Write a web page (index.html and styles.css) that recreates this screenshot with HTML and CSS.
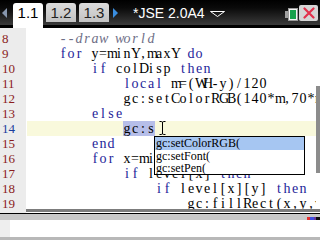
FILE: index.html
```
<!DOCTYPE html>
<html>
<head>
<meta charset="utf-8">
<link rel="stylesheet" href="styles.css">
</head>
<body>
<div class="app">
  <header class="topbar">
    <span class="arrow arrow-left"></span>
    <div class="tab active">1.1</div>
    <div class="tab">1.2</div>
    <div class="tab">1.3</div>
    <span class="arrow arrow-right"></span>
    <div class="title">*JSE 2.0A4<svg class="drop" width="15" height="6" viewBox="0 0 15 6"><path d="M0.5 0.5 H14.5 L7.5 5.5 Z" fill="none" stroke="#fff" stroke-width="1"/></svg></div>
    <div class="status">
      <svg class="battery" width="13" height="13" viewBox="0 0 13 13"><rect x="0" y="3" width="3" height="7" fill="#a0a0a0"/><rect x="3.5" y="0.5" width="9" height="12" fill="#f4f4f4" stroke="#9a9a9a"/><rect x="5" y="2" width="6" height="9" fill="#17a14c"/></svg>
      <div class="close"><svg width="12" height="12" viewBox="0 0 12 12"><path d="M1.5 1.5 L10.5 10.5 M10.5 1.5 L1.5 10.5" stroke="#e2314c" stroke-width="2.2" stroke-linecap="round"/></svg></div>
    </div>
  </header>
  <main class="editor">
    <div class="gutter">
      <div class="num">8</div>
      <div class="num">9</div>
      <div class="num">10</div>
      <div class="num">11</div>
      <div class="num">12</div>
      <div class="num">13</div>
      <div class="num cur">14</div>
      <div class="num">15</div>
      <div class="num">16</div>
      <div class="num">17</div>
      <div class="num">18</div>
      <div class="num">19</div>
    </div>
    <div class="code">
      <div class="ln">    <span class="cm">--draw world</span></div>
      <div class="ln">    <span class="kw">for</span> y=minY,maxY <span class="kw">do</span></div>
      <div class="ln">        <span class="kw">if</span> colDisp <span class="kw">then</span></div>
      <div class="ln">            <span class="kw">local</span> m=(WH-y)/120</div>
      <div class="ln">            gc:setColorRGB(140*m,70*m,0)</div>
      <div class="ln">        <span class="kw">else</span></div>
      <div class="ln cur">            <span class="sel">gc:s</span></div>
      <div class="ln">        <span class="kw">end</span></div>
      <div class="ln">        <span class="kw">for</span> x=minX,maxX <span class="kw">do</span></div>
      <div class="ln">            <span class="kw">if</span> level[x] <span class="kw">then</span></div>
      <div class="ln">                <span class="kw">if</span> level[x][y] <span class="kw">then</span></div>
      <div class="ln">                    gc:fillRect(x,y,w,h)</div>
    </div>
    <div class="vscroll"><div class="thumb"></div></div>
    <div class="popup">
      <div class="opt on">gc:setColorRGB(</div>
      <div class="opt">gc:setFont(</div>
      <div class="opt">gc:setPen(</div>
    </div>
    <svg class="ibeam" width="7" height="14" viewBox="0 0 7 14"><path d="M0.5 0.5 H2.5 Q3.5 0.5 3.5 2 V12 Q3.5 13.5 2.5 13.5 H0.5 M6.5 0.5 H4.5 Q3.5 0.5 3.5 2 M3.5 12 Q3.5 13.5 4.5 13.5 H6.5" fill="none" stroke="#000" stroke-width="1"/></svg>
  </main>
  <div class="hbar"><div class="hbar-gutter"></div><div class="hbar-thumb"></div></div>
  <div class="rule"></div>
  <div class="band"><span class="marker"></span></div>
  <div class="entry"><div class="entry-side"></div></div>
  <div class="foot"></div>
</div>
<script src="script.js"></script>
</body>
</html>
```
FILE: styles.css
```
* { box-sizing: border-box; }
html, body { margin: 0; padding: 0; }
body {
  width: 320px;
  height: 240px;
  overflow: hidden;
  background: #fff;
  font-family: "Liberation Sans", sans-serif;
}
.app {
  width: 320px;
  height: 240px;
  display: flex;
  flex-direction: column;
}
.topbar {
  height: 28px;
  flex: none;
  display: flex;
  align-items: flex-start;
  background: linear-gradient(#000 0, #0a0a0a 8px, #3a3a3a 25px, #000 25px);
}
.arrow {
  width: 0;
  height: 0;
  border-top: 5px solid transparent;
  border-bottom: 5px solid transparent;
  margin-top: 8px;
}
.arrow-left {
  border-right: 5px solid #8796ad;
  margin-left: 2px;
  margin-right: 6px;
}
.arrow-right {
  border-left: 5px solid #3a8ee0;
  margin-left: 1px;
  margin-right: 15px;
}
.tab {
  width: 30px;
  height: 19px;
  margin-top: 3px;
  margin-right: 3px;
  border-radius: 3px 3px 0 0;
  background: linear-gradient(#dcdcdc, #c2c2c2);
  color: #222;
  font-size: 15px;
  line-height: 20px;
  text-align: center;
}
.tab.active {
  height: 25px;
  background: #fff;
  color: #000;
}
.title {
  color: #fff;
  font-size: 14px;
  line-height: 20px;
  margin-top: 3px;
  display: flex;
  align-items: center;
}
.drop { margin-left: 5px; margin-top: 2px; }
.status {
  margin-left: auto;
  margin-right: 2px;
  margin-top: 5px;
  display: flex;
  align-items: center;
  gap: 1px;
}
.battery { margin-top: 2px; }
.close {
  width: 19px;
  height: 16px;
  border-radius: 2px;
  background: #d6d6d6;
  display: flex;
  align-items: center;
  justify-content: center;
}

.editor {
  position: relative;
  height: 181px;
  flex: none;
  display: flex;
}
.gutter {
  width: 26px;
  flex: none;
  background: #ececec;
  padding-top: 3px;
}
.num {
  height: 15px;
  line-height: 15px;
  font-family: "Liberation Serif", serif;
  font-size: 13px;
  color: #8b1c1c;
  padding-left: 2px;
}
.num.cur { color: #1c3c9c; }
.code {
  flex: 1;
  min-width: 0;
  padding-top: 3px;
  padding-left: 1px;
  overflow: hidden;
  font-family: "Liberation Serif", serif;
  font-size: 14px;
  color: #000;
}
.ln {
  height: 15px;
  line-height: 15px;
  white-space: pre;
}
.ln.cur { background: #f9f9dc; }
.ch {
  display: inline-block;
  width: 8px;
  text-align: center;
}
.kw { color: #1e1e9a; }
.cm { color: #6e6e86; font-style: italic; }
.sel { background: #b6bee9; }
.vscroll {
  width: 4px;
  flex: none;
}
.thumb {
  margin-top: 58px;
  height: 87px;
  background: #8c8c8c;
}
.popup {
  position: absolute;
  left: 154px;
  top: 108px;
  width: 151px;
  border: 1px solid #000;
  background: #fff;
  font-family: "Liberation Serif", serif;
  font-size: 12px;
  color: #000;
}
.opt {
  height: 12px;
  line-height: 12px;
  padding-left: 1px;
  white-space: nowrap;
}
.opt:first-child { height: 13px; line-height: 13px; }
.opt.on { background: #a6c6f2; }
.ibeam {
  position: absolute;
  left: 159px;
  top: 93px;
}
.hbar {
  height: 4px;
  flex: none;
  display: flex;
}
.hbar-gutter { width: 26px; background: #ececec; }
.hbar-thumb { flex: 1; height: 3px; background: #7c7c7c; }
.rule { height: 1px; flex: none; background: #000; }
.band {
  height: 6px;
  flex: none;
  background: #c8c8c8;
  display: flex;
  justify-content: flex-end;
}
.marker {
  width: 13px;
  height: 3px;
  margin-top: 3px;
  background: linear-gradient(to right, #e53030 0 3px, #3f4fe0 3px 7px, #6a3a9a 7px 9px, #111 9px);
}
.entry {
  height: 17px;
  flex: none;
  display: flex;
  background: #fff;
}
.entry-side { width: 10px; background: #eeeeee; }
.foot { flex: 1; background: #b8b8b8; }
```
FILE: script.js
```
function splitChars(el) {
  Array.from(el.childNodes).forEach(function (n) {
    if (n.nodeType === 3) {
      var f = document.createDocumentFragment();
      Array.from(n.textContent).forEach(function (ch) {
        var s = document.createElement('span');
        s.className = 'ch';
        s.textContent = ch;
        f.appendChild(s);
      });
      el.replaceChild(f, n);
    } else if (n.nodeType === 1) {
      splitChars(n);
    }
  });
}
document.querySelectorAll('.code .ln').forEach(splitChars);
```
